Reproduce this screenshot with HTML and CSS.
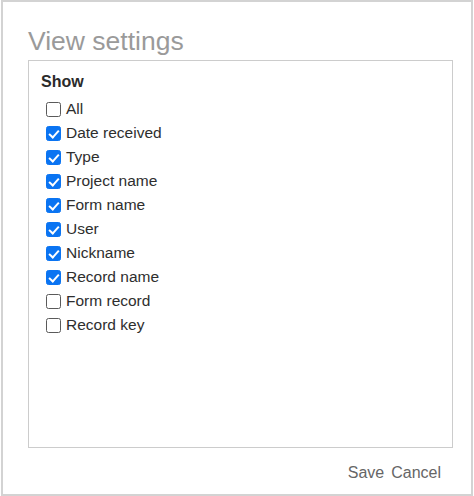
FILE: index.html
```html
<!DOCTYPE html>
<html>
<head>
<meta charset="utf-8">
<link rel="stylesheet" href="styles.css">
</head>
<body>
<div class="dialog">
  <h1 class="title">View settings</h1>
  <div class="panel">
    <div class="heading">Show</div>
    <ul class="options">
      <li><label><input type="checkbox"><span>All</span></label></li>
      <li><label><input type="checkbox" checked><span>Date received</span></label></li>
      <li><label><input type="checkbox" checked><span>Type</span></label></li>
      <li><label><input type="checkbox" checked><span>Project name</span></label></li>
      <li><label><input type="checkbox" checked><span>Form name</span></label></li>
      <li><label><input type="checkbox" checked><span>User</span></label></li>
      <li><label><input type="checkbox" checked><span>Nickname</span></label></li>
      <li><label><input type="checkbox" checked><span>Record name</span></label></li>
      <li><label><input type="checkbox"><span>Form record</span></label></li>
      <li><label><input type="checkbox"><span>Record key</span></label></li>
    </ul>
  </div>
  <div class="footer">
    <button class="btn">Save</button>
    <button class="btn">Cancel</button>
  </div>
</div>
</body>
</html>
```
FILE: styles.css
```css
html, body {
  margin: 0;
  padding: 0;
  background: #ffffff;
}
body {
  font-family: "Liberation Sans", Arial, sans-serif;
  width: 474px;
  height: 496px;
  overflow: hidden;
}
.dialog {
  box-sizing: border-box;
  margin-left: 1px;
  width: 472px;
  height: 496px;
  border: 2px solid #d3d3d3;
  padding: 24px 18px 0 25px;
  display: flex;
  flex-direction: column;
}
.title {
  margin: 0 0 4px 0;
  font-size: 26.5px;
  line-height: 30px;
  font-weight: normal;
  color: #9a9a9a;
}
.panel {
  box-sizing: border-box;
  width: 425px;
  height: 388px;
  border: 1px solid #cccccc;
  padding: 11px 12px 0 12px;
}
.heading {
  font-size: 16px;
  font-weight: bold;
  line-height: 20px;
  color: #2b2b2b;
  margin-bottom: 5px;
}
.options {
  list-style: none;
  margin: 0;
  padding: 0 0 0 5px;
}
.options li {
  height: 24px;
}
.options label {
  display: flex;
  align-items: center;
  height: 24px;
  font-size: 15.5px;
  line-height: 24px;
  color: #2e2e2e;
}
.options input {
  appearance: none;
  -webkit-appearance: none;
  box-sizing: border-box;
  width: 15px;
  height: 15px;
  margin: 1px 5px 0 0;
  border: 1.3px solid #5a5a5a;
  border-radius: 2.5px;
  background: #ffffff;
  position: relative;
  flex: none;
}
.options input:checked {
  background: #0a74f2;
  border-color: #0a74f2;
}
.options input:checked::before {
  content: "";
  position: absolute;
  left: 3.8px;
  top: 0.6px;
  width: 3.8px;
  height: 8px;
  border-right: 2.4px solid #ffffff;
  border-bottom: 2.4px solid #ffffff;
  transform: rotate(42deg);
}
.footer {
  display: flex;
  justify-content: flex-end;
  gap: 7px;
  margin-top: 15px;
  padding-right: 12px;
}
.btn {
  font-family: "Liberation Sans", Arial, sans-serif;
  font-size: 16px;
  line-height: 20px;
  color: #666666;
  background: none;
  border: none;
  padding: 0;
  margin: 0;
}
```
